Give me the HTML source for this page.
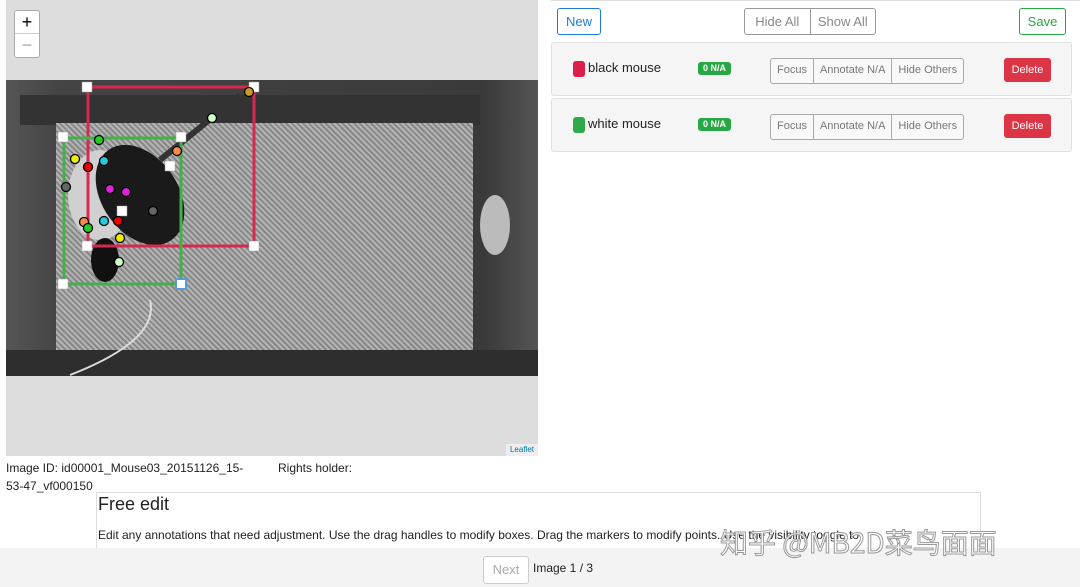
<!DOCTYPE html><html><head><style>
body{margin:0;width:1080px;height:587px;overflow:hidden;background:#fff;font-family:"Liberation Sans",sans-serif;position:relative}
.a{position:absolute}
.btn{position:absolute;border:1px solid;border-radius:3px;font-size:13px;text-align:center;box-sizing:border-box;background:#fff}
.row{position:absolute;left:551px;width:521px;height:54px;background:#f5f5f5;border:1px solid #e0e0e0;border-radius:3px;box-sizing:border-box}
.sw{position:absolute;left:21px;top:18px;width:12px;height:16px;border-radius:3px}
.lbl{position:absolute;left:36px;top:17px;font-size:13px;color:#222}
.bd{position:absolute;left:146px;top:19px;width:33px;height:13px;background:#28a745;color:#fff;font-size:9px;font-weight:bold;border-radius:3px;text-align:center;line-height:13px}
.grp{position:absolute;left:218px;top:15px;height:24px;border:1px solid #aaa;border-radius:3px;display:flex;font-size:11px;color:#777;background:#f8f8f8}
.grp span{padding:0 6px;line-height:23px;border-right:1px solid #aaa}
.grp span:last-child{border:none}
.del{position:absolute;left:452px;top:15px;width:47px;height:24px;background:#dc3545;color:#fff;font-size:11px;line-height:24px;text-align:center;border-radius:3px}
</style></head><body>
<div class="a" style="left:6px;top:0;width:532px;height:456px;background:#dddddd"></div>
<div class="a" style="left:6px;top:80px;width:532px;height:296px;background:linear-gradient(90deg,#555 0%,#444 10%,#3a3a3a 90%,#555 100%)"></div>
<div class="a" style="left:20px;top:95px;width:460px;height:30px;background:#333"></div>
<div class="a" style="left:56px;top:123px;width:417px;height:227px;background:#a0a0a0;background-image:repeating-linear-gradient(45deg,#b4b4b4 0 2px,#888 2px 4px),repeating-linear-gradient(-45deg,#c4c4c4 0 1px,transparent 1px 3px)"></div>
<div class="a" style="left:6px;top:350px;width:532px;height:26px;background:#2e2e2e"></div>
<svg class="a" style="left:0;top:0" width="540" height="460">
<ellipse cx="100" cy="195" rx="32" ry="45" fill="#d0d0d0"/>
<ellipse cx="140" cy="195" rx="38" ry="55" fill="#1a1a1a" transform="rotate(-35 140 195)"/>
<path d="M160 160 L240 95" stroke="#333" stroke-width="6"/>
<ellipse cx="105" cy="260" rx="14" ry="22" fill="#111"/>
<ellipse cx="495" cy="225" rx="15" ry="30" fill="#bbb"/>
<path d="M150 300 Q160 340 70 375" stroke="#ddd" stroke-width="2" fill="none"/>
<rect x="88" y="87" width="166" height="159" fill="none" stroke="#d6294f" stroke-width="3"/>
<rect x="64" y="138" width="117" height="146" fill="none" stroke="#44b04a" stroke-width="3"/>
<g fill="#fff" stroke="#999" stroke-width=".5">
<rect x="82" y="82" width="10" height="10"/><rect x="249" y="82" width="10" height="10"/><rect x="82" y="241" width="10" height="10"/><rect x="249" y="241" width="10" height="10"/>
<rect x="58" y="132" width="10" height="10"/><rect x="176" y="132" width="10" height="10"/><rect x="58" y="279" width="10" height="10"/><rect x="176" y="279" width="10" height="10" stroke="#5b9bd5" stroke-width="2"/>
<rect x="165" y="161" width="10" height="10"/><rect x="117" y="206" width="10" height="10"/></g>
<g stroke="#000" stroke-width="1.3">
<circle cx="249" cy="92" r="4.5" fill="#cc9a20"/><circle cx="212" cy="118" r="4.5" fill="#cfc"/>
<circle cx="99" cy="140" r="4.5" fill="#2c2"/><circle cx="177" cy="151" r="4.5" fill="#f84"/>
<circle cx="75" cy="159" r="4.5" fill="#ee0"/><circle cx="104" cy="161" r="4.5" fill="#2cd"/><circle cx="88" cy="167" r="4.5" fill="#e00"/>
<circle cx="66" cy="187" r="4.5" fill="#666"/><circle cx="110" cy="189" r="4.5" fill="#d2d"/><circle cx="126" cy="192" r="4.5" fill="#d2d"/>
<circle cx="153" cy="211" r="4.5" fill="#666"/><circle cx="84" cy="222" r="4.5" fill="#f84"/><circle cx="104" cy="221" r="4.5" fill="#2cd"/><circle cx="118" cy="221" r="4.5" fill="#e00"/>
<circle cx="88" cy="228" r="4.5" fill="#2c2"/><circle cx="120" cy="238" r="4.5" fill="#ee0"/><circle cx="119" cy="262" r="4.5" fill="#cfc"/></g>
</svg>
<div class="a" style="left:14px;top:10px;width:24px;height:46px;border:1px solid #aaa;border-radius:3px;background:#fff;font-size:18px;text-align:center;line-height:22px"><div style="border-bottom:1px solid #ccc">+</div><div style="color:#aaa">−</div></div>
<div class="a" style="left:506px;top:444px;width:32px;height:12px;background:#eee;font-size:8px;color:#0078a8;text-align:center;line-height:12px">Leaflet</div>
<div class="a" style="left:6px;top:459px;font-size:12px;color:#222;line-height:18px">Image ID: id00001_Mouse03_20151126_15-<br>53-47_vf000150</div>
<div class="a" style="left:278px;top:459px;font-size:12px;color:#222;line-height:18px">Rights holder:</div>
<div class="a" style="left:551px;top:0;width:529px;height:1px;background:#ddd"></div>
<div class="btn" style="left:557px;top:8px;width:44px;height:27px;color:#1e7bd6;border-color:#1e7bd6;line-height:25px">New</div>
<div class="btn" style="left:744px;top:8px;width:132px;height:27px;color:#888;border-color:#999;line-height:25px;display:flex"><span style="flex:1;border-right:1px solid #999">Hide All</span><span style="flex:1">Show All</span></div>
<div class="btn" style="left:1019px;top:8px;width:47px;height:27px;color:#28a745;border-color:#28a745;line-height:25px">Save</div>
<div class="row" style="top:42px"><div class="sw" style="background:#dc1e4a"></div><div class="lbl">black mouse</div><div class="bd">0 N/A</div><div class="grp"><span>Focus</span><span>Annotate N/A</span><span>Hide Others</span></div><div class="del">Delete</div></div>
<div class="row" style="top:98px"><div class="sw" style="background:#2eaa4a"></div><div class="lbl">white mouse</div><div class="bd">0 N/A</div><div class="grp"><span>Focus</span><span>Annotate N/A</span><span>Hide Others</span></div><div class="del">Delete</div></div>
<div class="a" style="left:96px;top:492px;width:885px;height:70px;border:1px solid #ddd;box-sizing:border-box"></div>
<div class="a" style="left:98px;top:494px;font-size:18px;color:#222">Free edit</div>
<div class="a" style="left:98px;top:525px;font-size:12px;color:#222;white-space:nowrap;line-height:20px">Edit any annotations that need adjustment. Use the drag handles to modify boxes. Drag the markers to modify points. Use the visibility toggle to<br>modify whether a component is visible or not.</div>
<div class="a" style="left:0;top:548px;width:1080px;height:39px;background:#f3f3f3"></div>
<div class="a" style="left:720px;top:522px;font-size:28px;color:#fff;-webkit-text-stroke:1px #999;font-family:'Noto Sans CJK SC',sans-serif;white-space:nowrap">知乎 @MB2D菜鸟面面</div>
<div class="btn" style="left:483px;top:556px;width:46px;height:28px;color:#aaa;border-color:#ccc;line-height:26px">Next</div>
<div class="a" style="left:533px;top:561px;font-size:12px;color:#222">Image 1 / 3</div>
</body></html>
